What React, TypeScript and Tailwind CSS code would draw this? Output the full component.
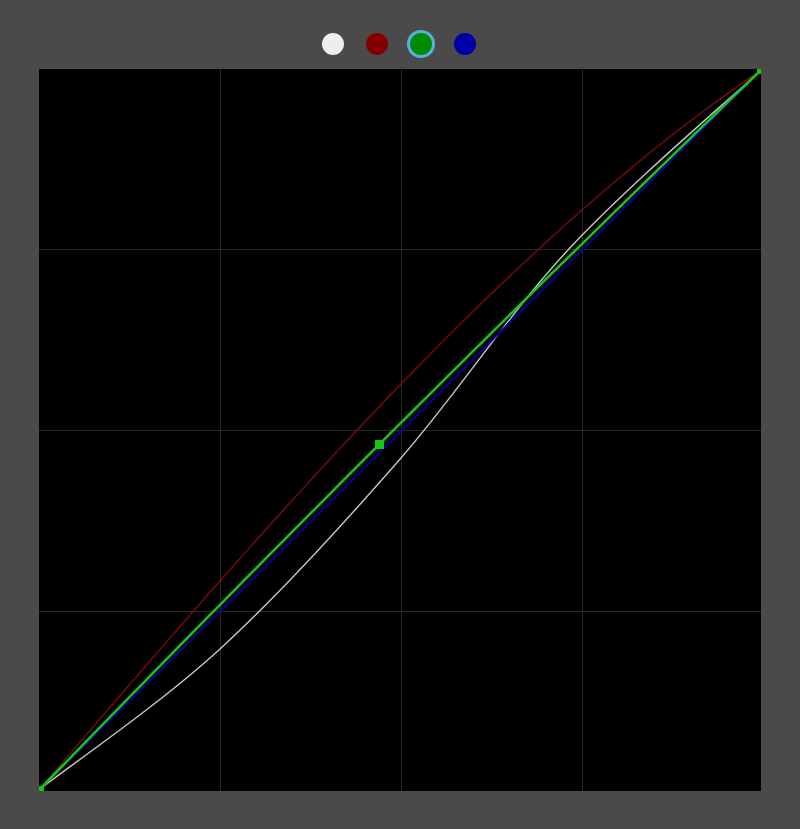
type Pt = [number, number];

const SIZE = 722;

// map normalized curve value to plot pixels
const toPx = (u: number, v: number): Pt => [1 + 720 * u, 720 - 718 * v];

function sample(fn: (u: number) => number, steps = 60): Pt[] {
  const pts: Pt[] = [];
  for (let i = 0; i <= steps; i++) {
    const u = i / steps;
    pts.push(toPx(u, fn(u)));
  }
  return pts;
}

function smoothPath(pts: Pt[]) {
  let d = `M${pts[0][0]},${pts[0][1]}`;
  for (let i = 0; i < pts.length - 1; i++) {
    const p0 = pts[i - 1] || pts[i];
    const p1 = pts[i];
    const p2 = pts[i + 1];
    const p3 = pts[i + 2] || p2;
    const c1x = p1[0] + (p2[0] - p0[0]) / 6;
    const c1y = p1[1] + (p2[1] - p0[1]) / 6;
    const c2x = p2[0] - (p3[0] - p1[0]) / 6;
    const c2y = p2[1] - (p3[1] - p1[1]) / 6;
    d += ` C${c1x.toFixed(2)},${c1y.toFixed(2)} ${c2x.toFixed(2)},${c2y.toFixed(2)} ${p2[0].toFixed(2)},${p2[1].toFixed(2)}`;
  }
  return d;
}

const redPath = smoothPath(sample((u) => u + 0.25 * u * (1 - u) * (0.7 + 0.6 * u)));
const bluePath = smoothPath(sample((u) => u - 0.012 * u * (1 - u)));
const greenPath = smoothPath(sample((u) => u + 0.035 * u * (1 - u)));
// composite curve, through a few points read off the plot
const whitePath = smoothPath([
  [1, 720], [181, 580], [362, 389], [529, 181], [721, 2],
]);

const channels = [
  { id: 'rgb', color: 'bg-[#eeeeee]' },
  { id: 'red', color: 'bg-[#820000]' },
  { id: 'green', color: 'bg-[#008a00]' },
  { id: 'blue', color: 'bg-[#0000a6]' },
];

function CurveGraph() {
  const grid = [181, 362, 543];
  return (
    <div className="w-[722px] h-[722px] bg-black">
      <svg width={SIZE} height={SIZE} viewBox={`0 0 ${SIZE} ${SIZE}`} className="block">
        {grid.map((g) => (
          <g key={g}>
            <line x1={g + 0.5} y1={0} x2={g + 0.5} y2={SIZE} stroke="#282828" strokeWidth={1} />
            <line x1={0} y1={g - 0.5} x2={SIZE} y2={g - 0.5} stroke="#282828" strokeWidth={1} />
          </g>
        ))}
        <path d={whitePath} fill="none" stroke="#c8c8c8" strokeWidth={1.4} />
        <path d={redPath} fill="none" stroke="#800a0a" strokeWidth={1.4} />
        <path d={bluePath} fill="none" stroke="#0000a0" strokeWidth={2} />
        <path d={greenPath} fill="none" stroke="#16c616" strokeWidth={2.5} />
        <rect x={-1} y={717} width={6} height={6} fill="#16c616" />
        <rect x={718} y={-1} width={6} height={6} fill="#16c616" />
        <rect x={336} y={371} width={9} height={9} fill="#16c616" />
      </svg>
    </div>
  );
}

export default function App() {
  const selected = 'green';
  return (
    <div className="w-[800px] h-[829px] bg-[#4a4a4a] flex flex-col items-center pt-[33px]">
      <div className="flex items-center gap-[22px] h-[22px] mb-[14px] pr-[2px]">
        {channels.map((c) => (
          <button
            key={c.id}
            className={`w-[22px] h-[22px] rounded-full ${c.color} ${
              c.id === selected ? 'ring-[3px] ring-[#58aee0]' : ''
            }`}
          />
        ))}
      </div>
      <CurveGraph />
    </div>
  );
}
